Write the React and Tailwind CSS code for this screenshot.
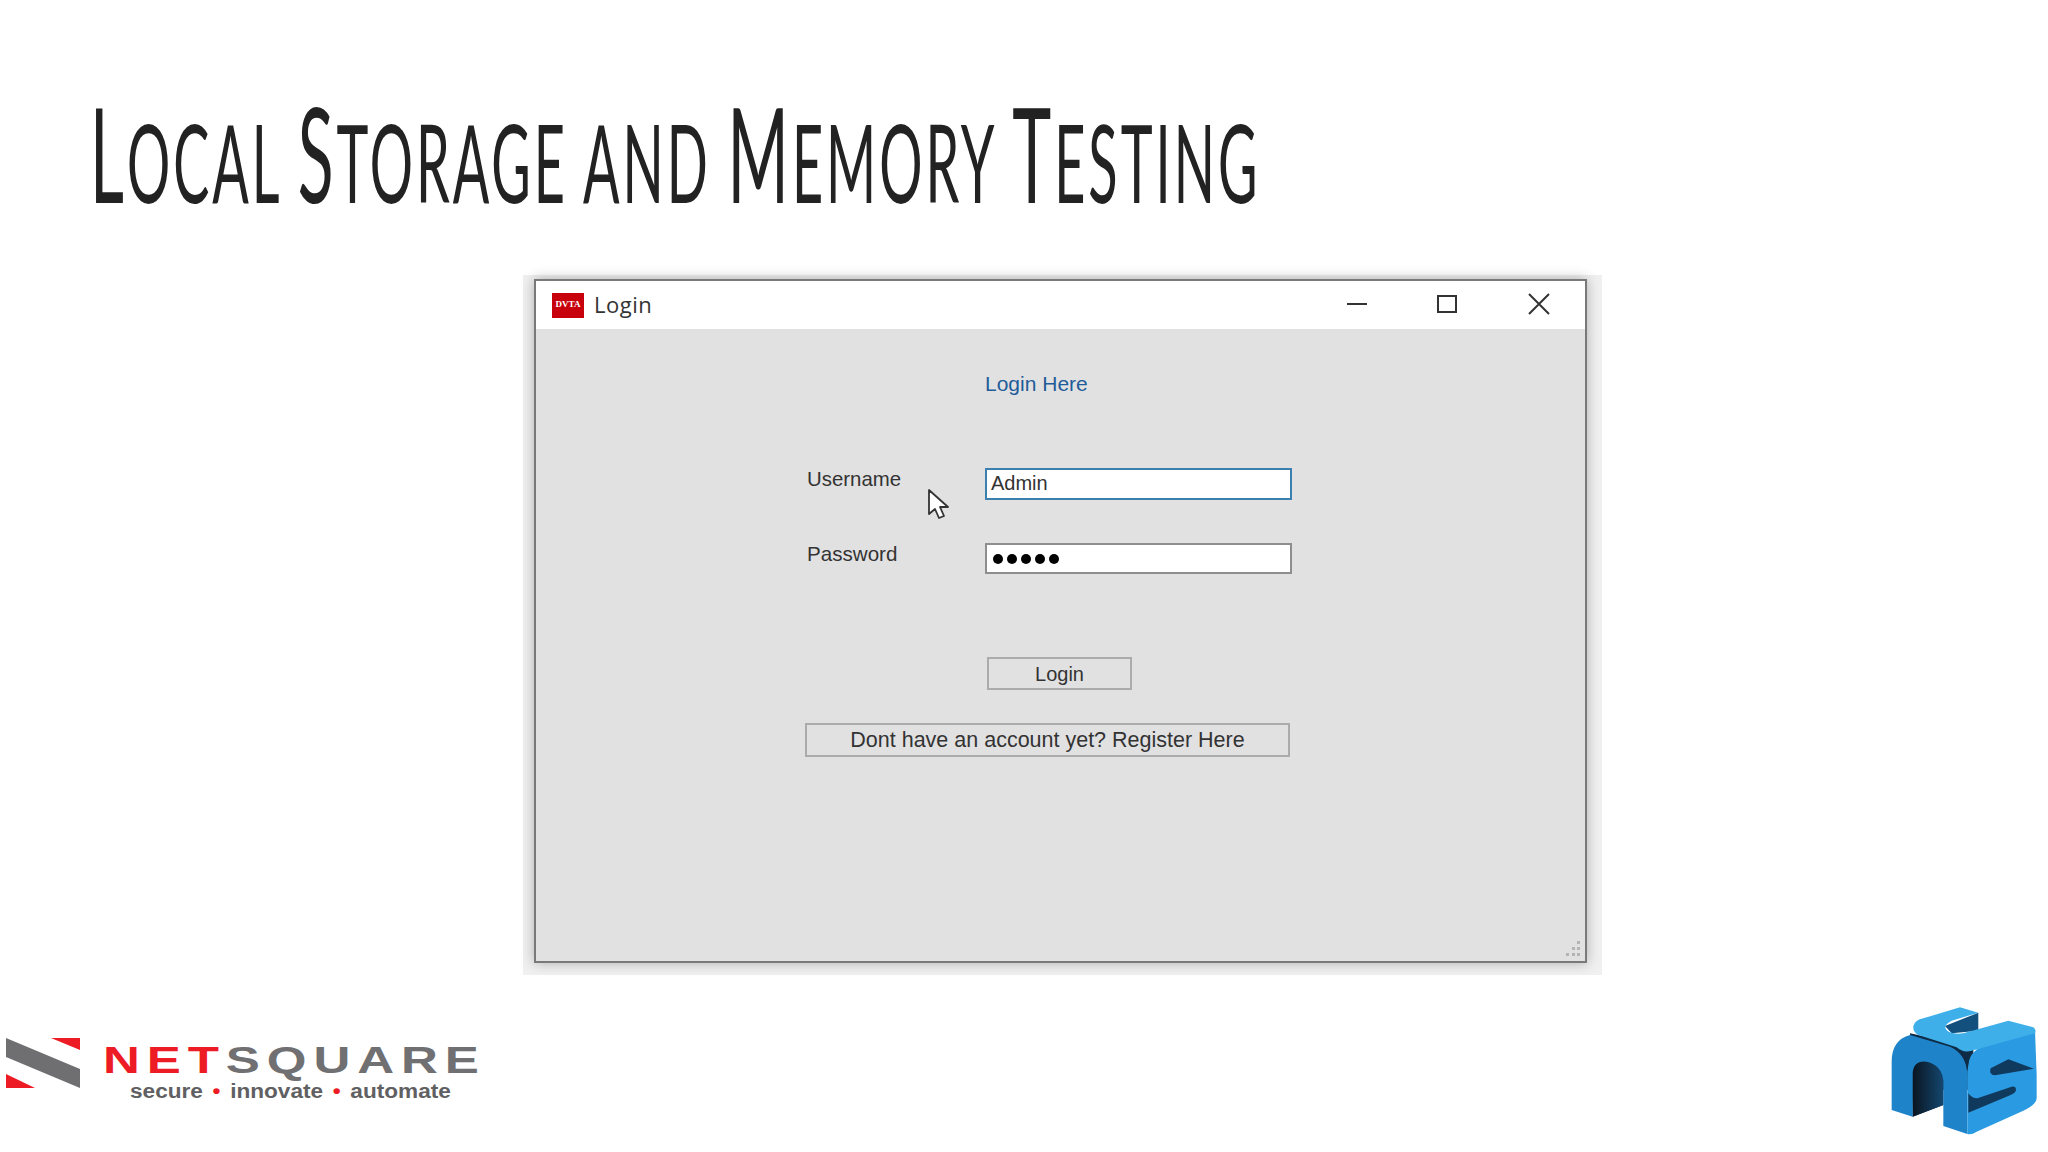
const formFont = "font-['Liberation_Sans',Arial,sans-serif] text-[#333333]";

const Title = () => (
  <h1 className="ml-[90px] h-[170px] pt-[87px] leading-[130px] whitespace-nowrap origin-left scale-x-[0.5] uppercase font-['Lato',sans-serif] font-normal text-[108px] text-[#222222] tracking-[6px]">
    <span className="text-[132px]">L</span>ocal <span className="text-[132px]">S</span>torage and{' '}
    <span className="text-[132px]">M</span>emory <span className="text-[132px]">T</span>esting
  </h1>
);

const WindowButtons = () => (
  <div className="flex items-center pr-[35px] pb-[2px] text-[#333333]">
    <svg width="22" height="22" viewBox="0 0 22 22" stroke="currentColor" strokeWidth="2"><path d="M1 11h20" /></svg>
    <svg className="ml-[68px]" width="22" height="22" viewBox="0 0 22 22" fill="none" stroke="currentColor" strokeWidth="2"><rect x="2" y="3" width="18" height="16" /></svg>
    <svg className="ml-[70px]" width="22" height="22" viewBox="0 0 22 22" stroke="currentColor" strokeWidth="2"><path d="M1 1l20 20M21 1L1 21" /></svg>
  </div>
);

const Cursor = () => (
  <svg className="absolute left-[391px] top-[159px]" width="26" height="33" viewBox="0 0 26 33" fill="#fff" stroke="#333" strokeWidth="1.8" strokeLinejoin="round">
    <path d="M2 2v24l6-5 4 9 5-2-4-9h8z" />
  </svg>
);

const Grip = () => (
  <svg className="absolute right-[3px] bottom-[3px]" width="18" height="18" viewBox="0 0 18 18" fill="#b4b4b4">
    <rect x="13" y="1" width="3" height="3" />
    <rect x="8" y="7" width="3" height="3" />
    <rect x="13" y="7" width="3" height="3" />
    <rect x="2" y="13" width="3" height="3" />
    <rect x="8" y="13" width="3" height="3" />
    <rect x="13" y="13" width="3" height="3" />
  </svg>
);

const LoginWindow = () => (
  <div className="ml-[523px] w-[1079px] h-[700px] bg-[#f0f0f0] pt-[4px] pl-[11px]">
    <div className="w-[1053px] h-[684px] border-2 border-[#77797b] bg-[#e1e1e2] shadow-[0_0_12px_rgba(0,0,0,0.28)] flex flex-col">
      <div className="h-[48px] bg-white flex items-center justify-between">
        <div className="flex items-center pl-[16px] gap-[10px]">
          <div className="w-[32px] h-[25px] bg-[#c8000c] flex items-center justify-center text-white font-bold text-[9px] font-['Liberation_Serif',serif]">DVTA</div>
          <span className="font-['Open_Sans',sans-serif] text-[22px] leading-[28px] pb-[2px] text-[#333333] tracking-[0.5px]">Login</span>
        </div>
        <WindowButtons />
      </div>

      <div className="relative flex-1">
        <div className="pl-[449px] pt-[39px] h-[139px] font-['Liberation_Sans',Arial,sans-serif] text-[21px] text-[#1f5c99]">Login Here</div>

        <div className="flex pl-[271px] h-[75px]">
          <span className={`${formFont} text-[20.4px] leading-[22px] w-[178px]`}>Username</span>
          <div className={`w-[307px] h-[32px] bg-white border-[2px] border-[#3c7fb1] pl-[4px] leading-[27px] text-[20px] ${formFont}`}>Admin</div>
        </div>
        <div className="flex pl-[271px] h-[114px]">
          <span className={`${formFont} text-[20.6px] leading-[22px] w-[178px]`}>Password</span>
          <div className="w-[307px] h-[31px] bg-white border-[2px] border-[#8e8e8e] pl-[6px] flex items-center gap-[4px]">
            {[0, 1, 2, 3, 4].map((i) => (
              <span key={i} className="w-[10px] h-[10px] rounded-full bg-black" />
            ))}
          </div>
        </div>
        <div className="pl-[451px]">
          <div className={`w-[145px] h-[33px] border-2 border-[#ababab] flex items-center justify-center text-[20px] ${formFont}`}>Login</div>
        </div>
        <div className="pl-[269px] mt-[33px]">
          <div className={`w-[485px] h-[34px] border-2 border-[#ababab] flex items-center justify-center text-[21.5px] ${formFont}`}>Dont have an account yet? Register Here</div>
        </div>
        <Cursor />
        <Grip />
      </div>
    </div>
  </div>
);

const NetsquareLogo = () => (
  <div className="flex items-start pt-[63px]">
    <svg className="ml-[6px]" width="74" height="50" viewBox="0 0 74 50">
      <path d="M0 0l74 31v19L0 19z" fill="#6f6f71" />
      <path d="M45 0h29v12z" fill="#ed1c24" />
      <path d="M0 36l29 14H0z" fill="#ed1c24" />
    </svg>
    <div className="ml-[23px] mt-[5px]">
      <div className="h-[36px] w-[372px] leading-[36px] whitespace-nowrap origin-left scale-x-[1.38] font-['Liberation_Sans',sans-serif] font-bold text-[37px] tracking-[5px] text-[#707072]">
        <span className="text-[#ed1c24]">NET</span>SQUARE
      </div>
      <div className="ml-[27px] mt-[2px] leading-[20px] whitespace-nowrap origin-left scale-x-[1.13] [word-spacing:3px] font-['Liberation_Sans',sans-serif] font-bold text-[20px] text-[#606062]">
        secure <span className="text-[#ed1c24]">•</span> innovate <span className="text-[#ed1c24]">•</span> automate
      </div>
    </div>
  </div>
);

const NsLogo = () => (
  <svg className="mt-[15px]" width="188" height="162" viewBox="0 0 564 486">
    <defs>
      <linearGradient id="inner" x1="0" x2="1" y1="0" y2="0">
        <stop offset="0" stopColor="#0a1520" />
        <stop offset="1" stopColor="#14476f" />
      </linearGradient>
    </defs>
    {/* n */}
    <path d="M150 130L340 170V300H250V345L158 380z" fill="#0f2c47" />
    <path d="M158 380V250Q160 210 200 215 245 225 250 270V345z" fill="url(#inner)" />
    <path d="M95 360V215Q95 150 150 135L270 170Q322 190 322 260V432L250 408V272Q245 225 200 215 160 210 158 250V380z" fill="#1f83c9" />
    {/* s */}
    <path d="M325 225Q328 185 370 168L525 122 530 255V325Q528 345 490 362L350 425Q335 435 322 432V240z" fill="#2a9be2" />
    <path d="M270 168L345 168Q325 195 322 245 318 195 270 168z" fill="#0f2c47" />
    <path d="M392 235L445 208 522 236 405 256Q385 255 392 235z" fill="#0f3a5e" />
    <path d="M325 310Q335 325 352 325L455 290Q468 288 468 300 468 308 450 316L325 368z" fill="#0f3a5e" />
    {/* lid */}
    <path d="M355 68L255 108 275 130 355 122z" fill="#14507d" />
    <path d="M160 108Q165 90 190 85L300 52 355 68 275 92Q250 105 258 118 270 135 310 130L445 92 520 112Q530 120 525 130L335 182Q310 190 290 172L175 135Q158 125 160 108z" fill="#3fafea" />
  </svg>
);

export default function App() {
  return (
    <div className="w-[2048px] h-[1152px] bg-white overflow-hidden flex flex-col">
      <div className="h-[275px]">
        <Title />
      </div>
      <LoginWindow />
      <div className="flex-1 flex justify-between">
        <NetsquareLogo />
        <NsLogo />
      </div>
    </div>
  );
}
